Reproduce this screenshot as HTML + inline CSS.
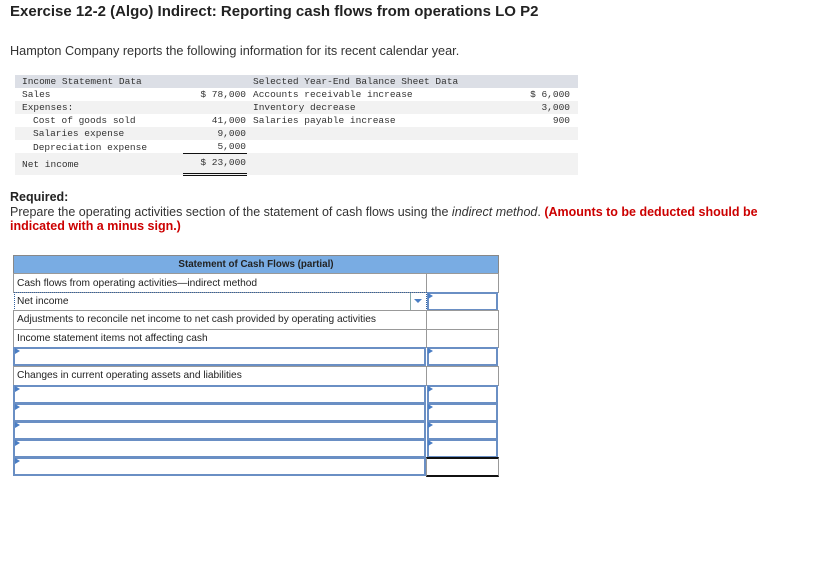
<!DOCTYPE html>
<html><head><meta charset="utf-8"><style>
*{margin:0;padding:0;box-sizing:border-box}
body{width:818px;height:562px;background:#fff;position:relative;font-family:"Liberation Sans",sans-serif;color:#222;overflow:hidden}
.a{position:absolute;white-space:nowrap}
.m{font-family:"Liberation Mono",monospace;font-size:9.5px;color:#333}
.r{text-align:right}
.band{position:absolute;left:15px;width:563px;height:13px}
.t{position:absolute;font-size:10.2px;color:#222;white-space:nowrap}
.cell{position:absolute;border:1px solid #999}
.in{position:absolute;border:2px solid #6a8fc4;background:#fff}
.tri{position:absolute;width:0;height:0;border-top:3px solid transparent;border-bottom:3px solid transparent;border-left:5px solid #4a7ec4}
</style></head><body>
<div class="a" style="left:10px;top:3px;font-size:15px;font-weight:bold;color:#222">Exercise 12-2 (Algo) Indirect: Reporting cash flows from operations LO P2</div>
<div class="a" style="left:10px;top:44px;font-size:12.7px;color:#333">Hampton Company reports the following information for its recent calendar year.</div>

<div class="band" style="top:75px;background:#dcdfe6"></div>
<div class="band" style="top:101px;background:#f2f2f2"></div>
<div class="band" style="top:127px;background:#f2f2f2"></div>
<div class="band" style="top:153px;height:22px;background:#f2f2f2"></div>
<div class="a m" style="left:22px;top:76px">Income Statement Data</div>
<div class="a m" style="left:253px;top:76px">Selected Year-End Balance Sheet Data</div>
<div class="a m" style="left:22px;top:89px">Sales</div>
<div class="a m r" style="left:180px;width:66px;top:89px">$ 78,000</div>
<div class="a m" style="left:253px;top:89px">Accounts receivable increase</div>
<div class="a m r" style="left:500px;width:70px;top:89px">$ 6,000</div>
<div class="a m" style="left:22px;top:102px">Expenses:</div>
<div class="a m" style="left:253px;top:102px">Inventory decrease</div>
<div class="a m r" style="left:500px;width:70px;top:102px">3,000</div>
<div class="a m" style="left:33px;top:115px">Cost of goods sold</div>
<div class="a m r" style="left:180px;width:66px;top:115px">41,000</div>
<div class="a m" style="left:253px;top:115px">Salaries payable increase</div>
<div class="a m r" style="left:500px;width:70px;top:115px">900</div>
<div class="a m" style="left:33px;top:128px">Salaries expense</div>
<div class="a m r" style="left:180px;width:66px;top:128px">9,000</div>
<div class="a m" style="left:33px;top:142px">Depreciation expense</div>
<div class="a m r" style="left:180px;width:66px;top:141px">5,000</div>
<div style="position:absolute;left:183px;top:153px;width:64px;border-top:1px solid #111"></div>
<div class="a m" style="left:22px;top:159px">Net income</div>
<div class="a m r" style="left:180px;width:66px;top:157px">$ 23,000</div>
<div style="position:absolute;left:183px;top:173px;width:64px;height:3px;border-top:1px solid #111;border-bottom:1px solid #111"></div>

<div class="a" style="left:10px;top:190px;font-size:12.5px;font-weight:bold;color:#222">Required:</div>
<div class="a" style="left:10px;top:205px;font-size:12.5px;color:#333">Prepare the operating activities section of the statement of cash flows using the <i>indirect method</i>. <b style="color:#c00">(Amounts to be deducted should be</b></div>
<div class="a" style="left:10px;top:219px;font-size:12.5px;font-weight:bold;color:#c00">indicated with a minus sign.)</div>

<div style="position:absolute;left:13px;top:255px;width:486px;height:19px;background:#79ace3;border:1px solid #888"></div>
<div class="a" style="left:13px;width:486px;top:259px;text-align:center;font-size:9.8px;font-weight:bold;color:#222">Statement of Cash Flows (partial)</div>

<div class="cell" style="left:13px;top:273px;width:414px;height:20px"></div><div class="cell" style="left:426px;top:273px;width:73px;height:20px"></div>
<div class="t" style="left:17px;top:278px">Cash flows from operating activities—indirect method</div>
<div style="position:absolute;left:14px;top:292px;width:413px;height:19px;border:1px dotted #3060a0"></div>
<div style="position:absolute;left:410px;top:293px;width:16px;height:17px;border-left:1px solid #8aa"></div>
<div style="position:absolute;left:414px;top:299px;border-left:4px solid transparent;border-right:4px solid transparent;border-top:4px solid #4a7ec4"></div>
<div class="t" style="left:17px;top:296px">Net income</div>
<div class="in" style="left:427px;top:292px;width:71px;height:19px"></div><div class="tri" style="left:428px;top:293px"></div>
<div class="cell" style="left:13px;top:310px;width:414px;height:20px"></div><div class="cell" style="left:426px;top:310px;width:73px;height:20px"></div>
<div class="t" style="left:17px;top:314px">Adjustments to reconcile net income to net cash provided by operating activities</div>
<div class="cell" style="left:13px;top:329px;width:414px;height:19px"></div><div class="cell" style="left:426px;top:329px;width:73px;height:19px"></div>
<div class="t" style="left:17px;top:333px">Income statement items not affecting cash</div>
<div class="in" style="left:13px;top:347px;width:413px;height:19px"></div><div class="tri" style="left:15px;top:348px"></div>
<div class="in" style="left:427px;top:347px;width:71px;height:19px"></div><div class="tri" style="left:428px;top:348px"></div>
<div class="cell" style="left:13px;top:366px;width:414px;height:20px"></div><div class="cell" style="left:426px;top:366px;width:73px;height:20px"></div>
<div class="t" style="left:17px;top:370px">Changes in current operating assets and liabilities</div>
<div class="in" style="left:13px;top:385px;width:413px;height:19px"></div><div class="tri" style="left:15px;top:386px"></div>
<div class="in" style="left:427px;top:385px;width:71px;height:19px"></div><div class="tri" style="left:428px;top:386px"></div>
<div class="in" style="left:13px;top:403px;width:413px;height:19px"></div><div class="tri" style="left:15px;top:404px"></div>
<div class="in" style="left:427px;top:403px;width:71px;height:19px"></div><div class="tri" style="left:428px;top:404px"></div>
<div class="in" style="left:13px;top:421px;width:413px;height:19px"></div><div class="tri" style="left:15px;top:422px"></div>
<div class="in" style="left:427px;top:421px;width:71px;height:19px"></div><div class="tri" style="left:428px;top:422px"></div>
<div class="in" style="left:13px;top:439px;width:413px;height:19px"></div><div class="tri" style="left:15px;top:440px"></div>
<div class="in" style="left:427px;top:439px;width:71px;height:19px"></div><div class="tri" style="left:428px;top:440px"></div>
<div class="in" style="left:13px;top:457px;width:413px;height:19px"></div><div class="tri" style="left:15px;top:458px"></div>
<div style="position:absolute;left:426px;top:457px;width:73px;height:20px;border:1px solid #999;border-top:2px solid #111;border-bottom:2px solid #111"></div>
</body></html>
